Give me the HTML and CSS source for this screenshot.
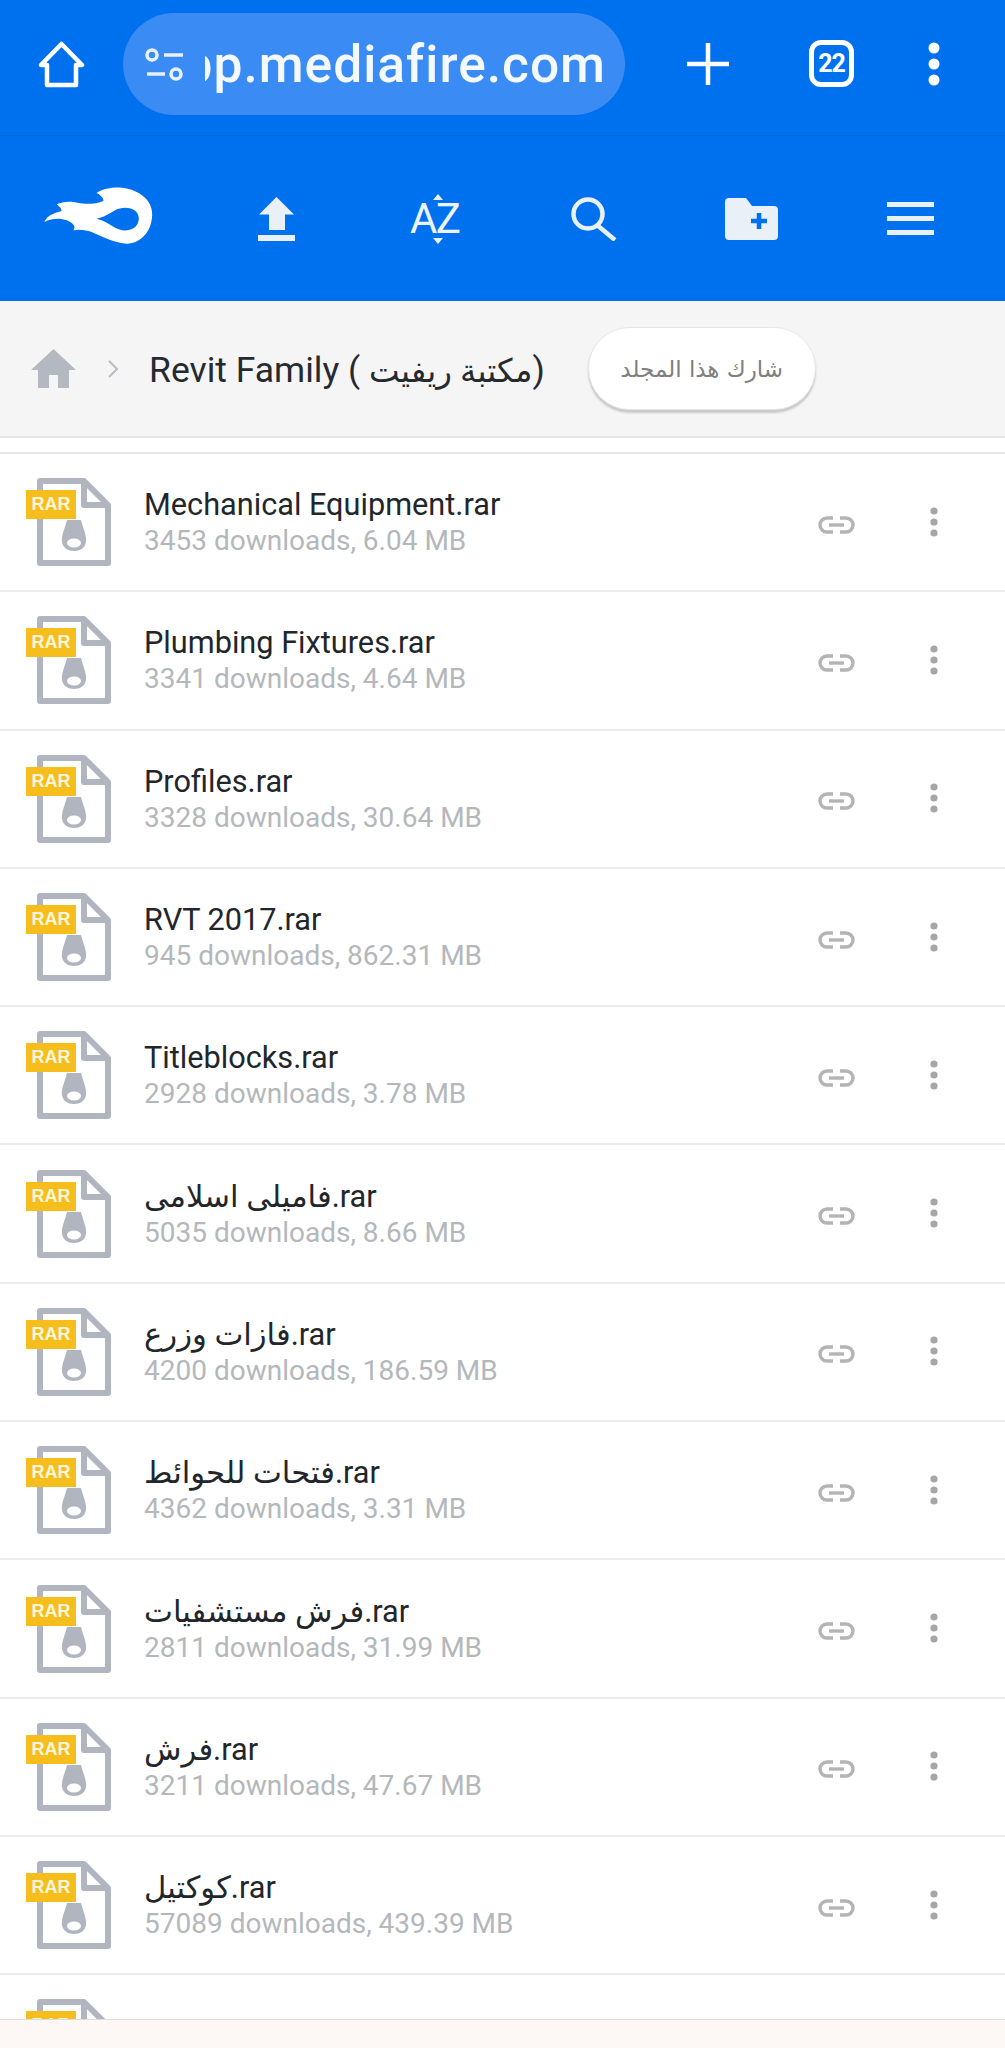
FILE: index.html
```html
<!DOCTYPE html>
<html lang="en">
<head>
  <meta charset="UTF-8">
  <meta name="viewport" content="width=device-width, initial-scale=1.0">
  <title>Revit Family - MediaFire</title>
  <link rel="stylesheet" href="styles.css">
</head>
<body>
  <svg class="defs" width="0" height="0">
    <symbol id="file" viewBox="0 0 74 88">
      <path d="M3 3H47L71 27V85H3Z" fill="#fff" stroke="#b1b5c0" stroke-width="6" stroke-linejoin="round"/>
      <path d="M47 3V27H71" fill="none" stroke="#b1b5c0" stroke-width="6" stroke-linejoin="round"/>
      <path d="M30 42H44C46 50 50 58 49 64C48 70 43 73 37 73C31 73 26 70 25 64C24 58 28 50 30 42Z" fill="#b1b5c0"/>
      <ellipse cx="37" cy="65" rx="7" ry="4.5" fill="#fff"/>
    </symbol>
    <symbol id="link" viewBox="0 0 37 18">
      <path d="M15 2H9A7 7 0 0 0 9 16H15M22 2H28A7 7 0 0 1 28 16H22" fill="none" stroke="#b4b4b4" stroke-width="3.4"/>
      <path d="M11 9H26" stroke="#b4b4b4" stroke-width="3.4"/>
    </symbol>
    <symbol id="dots" viewBox="0 0 8 30">
      <circle cx="4" cy="4" r="3.6" fill="#a6a6a6"/>
      <circle cx="4" cy="15" r="3.6" fill="#a6a6a6"/>
      <circle cx="4" cy="26" r="3.6" fill="#a6a6a6"/>
    </symbol>
  </svg>

  <header class="browser-bar">
    <svg class="home-icon" viewBox="0 0 47 47">
      <path d="M3 24L23.500 3L44 24H38V44H9V24Z" fill="none" stroke="#fff" stroke-width="4.500" stroke-linejoin="round"/>
    </svg>
    <div class="url-pill">
      <svg class="tune-icon" viewBox="0 0 39 33">
        <circle cx="7" cy="7" r="5" fill="none" stroke="#e8f1fd" stroke-width="3.500"/>
        <path d="M19 7H38M2 26H20" stroke="#e8f1fd" stroke-width="3.500"/>
        <circle cx="31" cy="26" r="5" fill="none" stroke="#e8f1fd" stroke-width="3.500"/>
      </svg>
      <div class="url-clip"><span>app.mediafire.com</span></div>
    </div>
    <svg class="plus-icon" viewBox="0 0 42 42">
      <path d="M21 0V42M0 21H42" stroke="#fff" stroke-width="4.500"/>
    </svg>
    <div class="tab-count">22</div>
    <svg class="more-icon" viewBox="0 0 12 44">
      <circle cx="6" cy="6" r="5.500" fill="#fff"/>
      <circle cx="6" cy="22" r="5.500" fill="#fff"/>
      <circle cx="6" cy="38" r="5.500" fill="#fff"/>
    </svg>
  </header>

  <nav class="toolbar">
    <svg class="flame" viewBox="24 20 332 174">
      <path fill="#fff" fill-rule="evenodd" d="M28 125C36 108 50 100 80 92C80 84 72 78 65 72C85 62 110 62 130 68C150 72 185 72 205 62C208 56 198 44 185 38C205 24 235 20 262 22C315 28 355 62 352 105C350 160 310 192 275 190C230 186 195 165 170 155C155 150 135 146 115 150C122 142 120 130 95 120C75 112 50 114 28 125ZM185 115C205 112 225 100 240 90C258 80 285 78 302 92C316 105 316 130 297 143C280 153 258 153 238 141C222 130 205 120 185 115Z"/>
    </svg>
    <div class="tool">
      <svg class="upload" viewBox="0 0 37 44">
        <path d="M18.500 0L36 17.500H27V33H11V17.500H1Z" fill="#e9f0f8"/>
        <rect y="38" width="37" height="6" fill="#e9f0f8"/>
      </svg>
    </div>
    <div class="tool">
      <div class="sort">
        <i class="tri-up"></i>
        <span class="az">AZ</span>
        <i class="tri-down"></i>
      </div>
    </div>
    <div class="tool">
      <svg class="search" viewBox="0 0 47 44">
        <circle cx="18" cy="17" r="14.500" fill="none" stroke="#e9f0f8" stroke-width="4.500"/>
        <path d="M27 28L45 43" stroke="#e9f0f8" stroke-width="4.500"/>
      </svg>
    </div>
    <div class="tool">
      <svg class="folder" viewBox="0 0 53 42">
        <path d="M4 0H21L27 8H49Q53 8 53 12V38Q53 42 49 42H4Q0 42 0 38V4Q0 0 4 0Z" fill="#e9f0f8"/>
        <path d="M34 15V31M26 23H42" stroke="#0071ee" stroke-width="4.500"/>
      </svg>
    </div>
    <div class="tool">
      <div class="menu"><i></i><i></i><i></i></div>
    </div>
  </nav>

  <section class="crumbs">
    <svg class="crumb-home" viewBox="0 0 45 39">
      <path d="M22.500 0L45 21H38V39H27V26H18V39H7V21H0Z" fill="#b4b8c1"/>
    </svg>
    <svg class="chevron" viewBox="0 0 10 18">
      <path d="M1 1L9 9L1 17" fill="none" stroke="#b9bcc3" stroke-width="2"/>
    </svg>
    <h1 class="folder-name">Revit Family ( <span class="folder-ar">مكتبة ريفيت</span>)</h1>
    <button class="share-btn">شارك هذا المجلد</button>
  </section>

  <main class="file-list">
    <div class="row">
      <div class="file-icon"><svg><use href="#file"/></svg><span class="rar">RAR</span></div>
      <div class="info"><div class="name">Mechanical Equipment.rar</div><div class="meta">3453 downloads, 6.04 MB</div></div>
      <svg class="link"><use href="#link"/></svg>
      <svg class="dots"><use href="#dots"/></svg>
    </div>
    <div class="row">
      <div class="file-icon"><svg><use href="#file"/></svg><span class="rar">RAR</span></div>
      <div class="info"><div class="name">Plumbing Fixtures.rar</div><div class="meta">3341 downloads, 4.64 MB</div></div>
      <svg class="link"><use href="#link"/></svg>
      <svg class="dots"><use href="#dots"/></svg>
    </div>
    <div class="row">
      <div class="file-icon"><svg><use href="#file"/></svg><span class="rar">RAR</span></div>
      <div class="info"><div class="name">Profiles.rar</div><div class="meta">3328 downloads, 30.64 MB</div></div>
      <svg class="link"><use href="#link"/></svg>
      <svg class="dots"><use href="#dots"/></svg>
    </div>
    <div class="row">
      <div class="file-icon"><svg><use href="#file"/></svg><span class="rar">RAR</span></div>
      <div class="info"><div class="name">RVT 2017.rar</div><div class="meta">945 downloads, 862.31 MB</div></div>
      <svg class="link"><use href="#link"/></svg>
      <svg class="dots"><use href="#dots"/></svg>
    </div>
    <div class="row">
      <div class="file-icon"><svg><use href="#file"/></svg><span class="rar">RAR</span></div>
      <div class="info"><div class="name">Titleblocks.rar</div><div class="meta">2928 downloads, 3.78 MB</div></div>
      <svg class="link"><use href="#link"/></svg>
      <svg class="dots"><use href="#dots"/></svg>
    </div>
    <div class="row">
      <div class="file-icon"><svg><use href="#file"/></svg><span class="rar">RAR</span></div>
      <div class="info"><div class="name">فاميلى اسلامى.rar</div><div class="meta">5035 downloads, 8.66 MB</div></div>
      <svg class="link"><use href="#link"/></svg>
      <svg class="dots"><use href="#dots"/></svg>
    </div>
    <div class="row">
      <div class="file-icon"><svg><use href="#file"/></svg><span class="rar">RAR</span></div>
      <div class="info"><div class="name">فازات وزرع.rar</div><div class="meta">4200 downloads, 186.59 MB</div></div>
      <svg class="link"><use href="#link"/></svg>
      <svg class="dots"><use href="#dots"/></svg>
    </div>
    <div class="row">
      <div class="file-icon"><svg><use href="#file"/></svg><span class="rar">RAR</span></div>
      <div class="info"><div class="name">فتحات للحوائط.rar</div><div class="meta">4362 downloads, 3.31 MB</div></div>
      <svg class="link"><use href="#link"/></svg>
      <svg class="dots"><use href="#dots"/></svg>
    </div>
    <div class="row">
      <div class="file-icon"><svg><use href="#file"/></svg><span class="rar">RAR</span></div>
      <div class="info"><div class="name">فرش مستشفيات.rar</div><div class="meta">2811 downloads, 31.99 MB</div></div>
      <svg class="link"><use href="#link"/></svg>
      <svg class="dots"><use href="#dots"/></svg>
    </div>
    <div class="row">
      <div class="file-icon"><svg><use href="#file"/></svg><span class="rar">RAR</span></div>
      <div class="info"><div class="name">فرش.rar</div><div class="meta">3211 downloads, 47.67 MB</div></div>
      <svg class="link"><use href="#link"/></svg>
      <svg class="dots"><use href="#dots"/></svg>
    </div>
    <div class="row">
      <div class="file-icon"><svg><use href="#file"/></svg><span class="rar">RAR</span></div>
      <div class="info"><div class="name">كوكتيل.rar</div><div class="meta">57089 downloads, 439.39 MB</div></div>
      <svg class="link"><use href="#link"/></svg>
      <svg class="dots"><use href="#dots"/></svg>
    </div>
    <div class="row">
      <div class="file-icon"><svg><use href="#file"/></svg><span class="rar">RAR</span></div>
      <div class="info"><div class="name">لمبات.rar</div></div>
    </div>
  </main>

  <footer class="bottom-bar"></footer>
</body>
</html>
```

FILE: styles.css
```css
body {
  margin: 0;
  width: 1005px;
  height: 2048px;
  overflow: hidden;
  display: flex;
  flex-direction: column;
  background: #fff;
  font-family: Roboto, "DejaVu Sans", sans-serif;
}
.defs {
  position: absolute;
}

/* browser chrome */
.browser-bar {
  flex: none;
  height: 136px;
  box-sizing: border-box;
  display: flex;
  align-items: center;
  padding-left: 38px;
  background: #0071ee;
  border-bottom: 1px solid #0065d6;
}
.home-icon {
  width: 47px;
  height: 47px;
  margin-top: -7px;
}
.url-pill {
  width: 502px;
  height: 102px;
  margin-left: 38px;
  margin-top: -7px;
  box-sizing: border-box;
  padding: 0 19px 0 22px;
  display: flex;
  align-items: center;
  border-radius: 51px;
  background: #3a8bf4;
}
.tune-icon {
  flex: none;
  width: 39px;
  height: 33px;
}
.url-clip {
  flex: 1;
  min-width: 0;
  margin-left: 21px;
  display: flex;
  justify-content: flex-end;
  overflow: hidden;
  color: #f4f9ff;
  font-size: 51.500px;
  font-weight: 500;
  letter-spacing: 1px;
  white-space: nowrap;
}
.plus-icon {
  width: 42px;
  height: 42px;
  margin-left: 62px;
  margin-top: -8px;
}
.tab-count {
  width: 45px;
  height: 47px;
  box-sizing: border-box;
  margin-left: 80px;
  margin-top: -8px;
  border: 5px solid #fff;
  border-radius: 12px;
  color: #fff;
  font-size: 25px;
  font-weight: 700;
  line-height: 37px;
  text-align: center;
  letter-spacing: -1px;
}
.more-icon {
  width: 12px;
  height: 44px;
  margin-left: 74px;
  margin-top: -8px;
}

/* mediafire toolbar */
.toolbar {
  flex: none;
  height: 165px;
  display: grid;
  grid-template-columns: 154px repeat(5, 158.500px);
  align-items: center;
  padding-left: 43px;
  background: #0071ee;
}
.flame {
  width: 110.500px;
  height: 58px;
  margin-top: -6px;
}
.tool {
  display: flex;
  justify-content: center;
}
.upload {
  width: 37px;
  height: 44px;
}
.sort {
  position: relative;
  width: 54px;
  height: 50px;
}
.az {
  display: block;
  color: #eef4fb;
  font-size: 42px;
  font-weight: 400;
  line-height: 50px;
  text-align: center;
  letter-spacing: -1.500px;
}
.tri-up, .tri-down {
  position: absolute;
  left: 25px;
  width: 0;
  height: 0;
  border-left: 5px solid transparent;
  border-right: 5px solid transparent;
}
.tri-up {
  top: 0;
  border-bottom: 6px solid #e9f0f8;
}
.tri-down {
  bottom: 0;
  border-top: 6px solid #e9f0f8;
}
.search {
  width: 47px;
  height: 44px;
}
.folder {
  width: 53px;
  height: 42px;
}
.menu {
  width: 47px;
  height: 33px;
  display: flex;
  flex-direction: column;
  justify-content: space-between;
}
.menu i {
  height: 5px;
  background: #e9f0f8;
}

/* breadcrumb row */
.crumbs {
  flex: none;
  height: 137px;
  box-sizing: border-box;
  display: flex;
  align-items: center;
  padding-left: 31px;
  background: #f5f5f5;
  border-bottom: 2px solid #e4e4e4;
  margin-bottom: 14px;
}
.crumb-home {
  width: 45px;
  height: 39px;
}
.chevron {
  width: 10px;
  height: 18px;
  margin-left: 32px;
}
.folder-name {
  margin: 2px 0 0 31px;
  color: #262a30;
  font-size: 35.500px;
  font-weight: 400;
  white-space: nowrap;
}
.folder-ar {
  font-size: 32.500px;
}
.share-btn {
  width: 228px;
  height: 83px;
  margin-left: 43px;
  border: 1px solid #e6e6e6;
  border-radius: 42px;
  background: #fff;
  box-shadow: 0 3px 2px #c9c9c9;
  color: #808080;
  font-family: "DejaVu Sans", sans-serif;
  font-size: 23px;
}

/* file rows */
.file-list {
  flex: 1;
  min-height: 0;
  overflow: hidden;
  border-top: 2px solid #e8e8e8;
}
.row {
  height: 138.300px;
  box-sizing: border-box;
  display: flex;
  align-items: center;
  border-bottom: 2px solid #ebebeb;
}
.file-icon {
  position: relative;
  width: 74px;
  height: 88px;
  margin-left: 37px;
}
.file-icon svg {
  display: block;
  width: 74px;
  height: 88px;
}
.rar {
  position: absolute;
  left: -11px;
  top: 12px;
  width: 50px;
  height: 29px;
  background: #f6be1c;
  color: #fff6d8;
  font-family: "Liberation Sans", sans-serif;
  font-size: 18px;
  font-weight: 700;
  line-height: 29px;
  text-align: center;
}
.info {
  flex: 1;
  margin-left: 33px;
  padding-top: 1px;
}
.name {
  color: #22262b;
  font-size: 30.700px;
  line-height: 36px;
}
.meta {
  margin-top: 1px;
  color: #b4b7bb;
  font-size: 28px;
  line-height: 34px;
}
.link {
  width: 37px;
  height: 18px;
  margin-top: 5px;
}
.dots {
  width: 8px;
  height: 30px;
  margin: -1px 67px 0 75px;
}

.bottom-bar {
  flex: none;
  height: 28px;
  background: #fdf8f5;
  border-top: 1px solid #dcdcdc;
}
```
